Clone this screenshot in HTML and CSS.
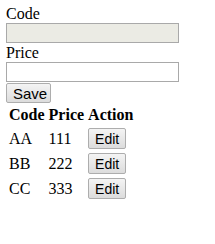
FILE: index.html
```html
<!DOCTYPE html>
<html lang="en">

<head>
    <meta charset="UTF-8">
    <title>Products</title>
    <link rel="stylesheet" href="styles.css">
</head>

<body>
    <form class="edit-form">
        <label for="code">Code</label>
        <input id="code" type="text" readonly>
        <label for="price">Price</label>
        <input id="price" type="text">
        <button type="button" class="btn">Save</button>
    </form>
    <table class="items">
        <tr>
            <th>Code</th>
            <th>Price</th>
            <th>Action</th>
        </tr>
        <tr>
            <td>AA</td>
            <td>111</td>
            <td><button type="button" class="btn">Edit</button></td>
        </tr>
        <tr>
            <td>BB</td>
            <td>222</td>
            <td><button type="button" class="btn">Edit</button></td>
        </tr>
        <tr>
            <td>CC</td>
            <td>333</td>
            <td><button type="button" class="btn">Edit</button></td>
        </tr>
    </table>
</body>

</html>
```

FILE: styles.css
```css
body {
    margin: 4px 6px;
    font-family: "Liberation Serif", "Times New Roman", serif;
    font-size: 16px;
    color: #000;
}

.edit-form label {
    display: block;
    line-height: 19px;
}

.edit-form input {
    display: block;
    box-sizing: border-box;
    width: 173px;
    height: 20px;
    margin: 0;
    border: 1px solid #a9a9a9;
    background: #fff;
}

#code {
    background: #ebebe4;
}

.btn {
    box-sizing: border-box;
    height: 21px;
    margin: 0;
    padding: 0 6px;
    font-family: "Liberation Sans", Arial, sans-serif;
    font-size: 14px;
    color: #000;
    border: 1px solid #adadad;
    border-radius: 2px;
    background: linear-gradient(#f4f4f4, #dcdcdc);
}

.edit-form .btn {
    display: block;
    width: 45px;
    height: 20px;
    margin-top: 1px;
    font-size: 15px;
}

.items {
    border-spacing: 2px;
}

.items th {
    text-align: left;
    padding: 1px;
}

.items td {
    padding: 1px;
}

.items td .btn {
    display: block;
    width: 38px;
}
```
